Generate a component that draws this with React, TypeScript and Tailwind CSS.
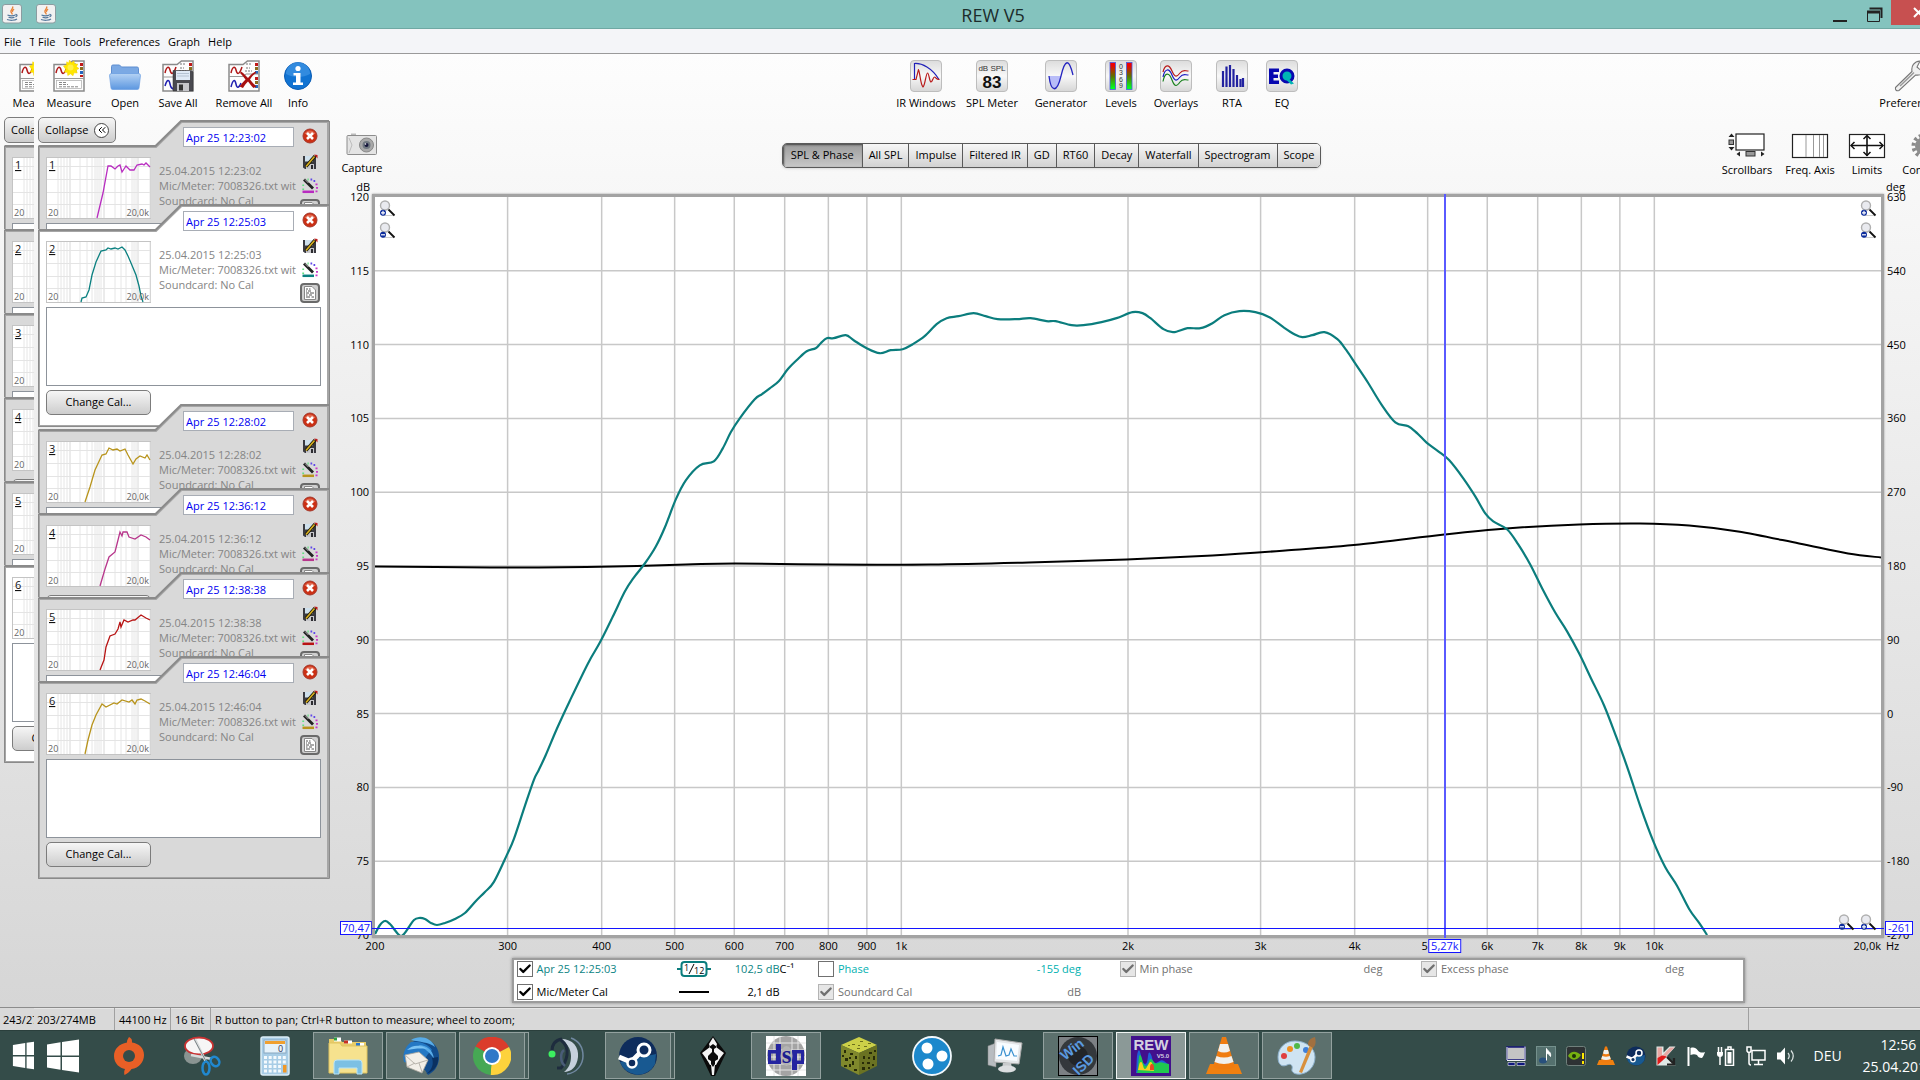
import React from 'react';
import { Check, ChevronsLeft } from 'lucide-react';

type Point = [number, number];

type Measurement = {
  id: number;
  time: string;
  color: string;
  notes: boolean;
  curve: string;
};

const measurements: Measurement[] = [
  { id: 1, time: '12:23:02', color: '#b82cc0', notes: true, curve: '51,61 57,36 62,9 65,9 69,12 72,9 74,8 76,15 78,12 80,9 84,13 88,13 91,8 96,7 98,8 100,6 104,10' },
  { id: 2, time: '12:25:03', color: '#0b8080', notes: true, curve: '35,61 36,57 40,56 43,49 46,34 50,21 55,10 60,9 62,7 65,8 69,7 72,8 76,6 79,9 82,15 85,22 90,34 93,45 95,55 97,61' },
  { id: 3, time: '12:28:02', color: '#b8941c', notes: true, curve: '39,61 44,46 49,29 56,14 60,13 63,7 67,9 71,8 74,10 79,8 82,14 87,23 90,18 94,15 99,17 101,14 104,19' },
  { id: 4, time: '12:36:12', color: '#b8368c', notes: false, curve: '54,61 59,44 63,32 69,27 71,19 74,7 76,11 77,7 81,7 83,12 89,14 95,10 100,12 104,15' },
  { id: 5, time: '12:38:38', color: '#b81414', notes: true, curve: '54,61 58,51 60,38 64,27 69,25 72,20 74,13 75,18 78,11 82,13 87,11 89,11 95,6 100,9 104,11' },
  { id: 6, time: '12:46:04', color: '#b8941c', notes: true, curve: '39,61 42,47 46,32 50,22 56,11 60,14 68,10 71,11 76,7 83,9 86,7 89,11 91,7 95,6 99,8 104,11' },
];

const splCurve: Point[] = [
  [0, 736], [5, 727], [10, 723], [15, 726], [19, 731], [23, 736], [26, 738], [29, 736], [34, 729], [39, 722], [44, 720], [50, 721],
  [56, 725], [62, 727], [70, 725], [80, 721], [90, 715], [101, 703], [110, 694], [119, 684], [132, 657], [139, 641], [150, 608],
  [159, 582], [164, 572], [171, 557], [182, 531], [195, 503], [213, 466], [225, 445], [238, 419], [250, 394], [259, 380],
  [270, 366], [281, 349], [290, 330], [301, 302], [311, 283], [325, 268], [339, 264], [348, 251], [356, 235], [365, 221],
  [380, 202], [387, 197], [395, 191], [404, 184], [413, 172], [423, 162], [432, 154], [441, 151], [446, 146], [452, 141],
  [459, 141], [471, 138], [479, 143], [492, 151], [505, 156], [516, 153], [528, 152], [538, 147], [550, 139], [562, 127],
  [572, 121], [584, 119], [599, 116], [611, 119], [623, 122], [642, 122], [656, 121], [672, 124], [681, 124], [697, 128],
  [709, 128], [727, 125], [742, 121], [758, 115], [768, 116], [776, 121], [789, 132], [799, 135], [813, 131], [826, 131],
  [838, 126], [850, 118], [865, 114], [881, 115], [895, 120], [909, 130], [920, 137], [928, 140], [938, 138], [950, 135],
  [963, 142], [972, 153], [982, 168], [994, 186], [1007, 207], [1021, 225], [1034, 229], [1043, 236], [1052, 245], [1064, 254],
  [1075, 263], [1089, 281], [1101, 299], [1111, 316], [1119, 324], [1133, 332], [1144, 347], [1156, 367], [1168, 391],
  [1181, 415], [1193, 434], [1205, 456], [1217, 481], [1230, 508], [1242, 539], [1254, 572], [1266, 608], [1279, 643],
  [1291, 669], [1303, 688], [1315, 711], [1325, 725], [1333, 737],
];

const calCurve: Point[] = [
  [0, 369], [115, 370], [164, 370], [238, 369], [311, 367], [360, 366], [458, 367], [556, 367], [654, 365], [752, 362],
  [838, 358], [911, 353], [985, 347], [1070, 337], [1132, 331], [1205, 327], [1266, 326], [1315, 328], [1364, 334],
  [1425, 346], [1474, 356], [1507, 360],
];

const frequencies = [300, 400, 500, 600, 700, 800, 900, 1000, 2000, 3000, 4000, 5000, 6000, 7000, 8000, 9000, 10000];
const levels = [120, 115, 110, 105, 100, 95, 90, 85, 80, 75, 70];

const xPercent = (hz: number) => (Math.log(hz / 200) / Math.log(100)) * 100;
const yPercent = (db: number) => ((120 - db) / 50) * 100;
const hzLabel = (hz: number) => (hz >= 1000 ? `${hz / 1000}k` : `${hz}`);

// Catmull-Rom spline through the points
const smoothPath = (pts: Point[]) =>
  pts.slice(1).reduce((d, p, i) => {
    const p0 = pts[Math.max(i - 1, 0)];
    const p1 = pts[i];
    const p3 = pts[Math.min(i + 2, pts.length - 1)];
    return `${d}C${p1[0] + (p[0] - p0[0]) / 6},${p1[1] + (p[1] - p0[1]) / 6} ${p[0] - (p3[0] - p1[0]) / 6},${p[1] - (p3[1] - p1[1]) / 6} ${p[0]},${p[1]}`;
  }, `M${pts[0][0]},${pts[0][1]}`);

/* ---------- icons ---------- */

const JavaIcon = () => (
  <svg width="20" height="20" viewBox="0 0 20 20">
    <rect x="0.500" y="0.500" width="19" height="18.500" rx="2.500" fill="#f1f1f1" stroke="#8b9ca0" />
    <path d="M10.500 2.500c1.500 2-2.500 3-1.500 5.500.5 1 1.500 1 1 2.500M12 5c-1 1-2 1.500-1.500 3" fill="none" stroke="#e8843a" strokeWidth="1.400" />
    <path d="M5.500 11c2 .8 6 .8 8 0M6.500 13.300c2 .6 4.500.6 6 0M5 15.500c3 1.200 8 1 10-.5M13.500 10.500c2-.3 2.200 1.700 0 2.300" fill="none" stroke="#54789c" strokeWidth="1.200" />
  </svg>
);

const SheetBack = () => (
  <>
    <path d="M1 4.500H15L19.500 1H31V31H1Z" fill="#fdfdfd" stroke="#8a8a8a" strokeWidth="1.500" />
    <path d="M3 13C4.500 6 7 6 8 10S11 16 14 7" fill="none" stroke="#b01818" strokeWidth="1.500" />
    <path d="M27 3h3v3h-3z" fill="#c01818" />
    <path d="M27 7h3v3h-3z" fill="#8a6c20" />
    <path d="M27 11h3v3h-3z" fill="#2468c0" />
    <path d="M18 4h6M18 8h4M17 11h7" stroke="#777" strokeWidth="1" strokeDasharray="2 1" />
  </>
);

const MeasureIcon = () => (
  <svg width="32" height="32" viewBox="0 0 32 32">
    <SheetBack />
    <path d="M1 18.500H31" stroke="#999" />
    <rect x="3.500" y="20.500" width="25" height="8" fill="#fff" stroke="#aaa" strokeWidth="0.700" />
    <path d="M6 22.500h7M6 24.500h9M6 26.800h19" stroke="#888" strokeDasharray="3 1" />
    <path d="M27 15h3v2h-3z" fill="#c01818" />
    <path d="M16.500 0l1.700 2.700L21 1l.5 3 3.200 0-1.200 2.800 2.500 1.700-2.800 1.500 1 3-3.200-.2-1 3-2.500-2-2.700 1.800-.4-3.200-3.200-.4 1.600-2.600L10.500 6l3-1 .2-3.200 2 1.200z" fill="#ffe600" stroke="#f5d000" strokeWidth="0.500" />
    <circle cx="17.500" cy="7.500" r="3" fill="#fff04a" />
  </svg>
);

const OpenIcon = () => (
  <svg width="32" height="32" viewBox="0 0 32 32">
    <defs>
      <linearGradient id="folder" x1="0" y1="0" x2="0" y2="1">
        <stop offset="0" stopColor="#b4d2f4" />
        <stop offset="1" stopColor="#5c97e0" />
      </linearGradient>
    </defs>
    <path d="M2.500 14V6.500q0-1.500 1.500-1.500h6.500l2 2H28q1.500 0 1.500 1.500V14z" fill="#7ba9e4" stroke="#5f8ed0" />
    <path d="M0.500 15.500q0-2 2-2h27q2 0 2 2L30 28q-.2 1.500-1.700 1.500H3.700Q2.200 29.500 2 28z" fill="url(#folder)" stroke="#6c9fe2" strokeWidth="0.700" />
  </svg>
);

const SaveAllIcon = () => (
  <svg width="32" height="32" viewBox="0 0 32 32">
    <SheetBack />
    <path d="M1 17H12M27 17H31" stroke="#999" />
    <path d="M3 26c2-7 4-7 5-2s3 5 4 5" fill="none" stroke="#2020b0" strokeWidth="1.500" />
    <path d="M11 10.500h18.500L31 12v19H11z" fill="#4a4a50" stroke="#333" strokeWidth="0.500" />
    <rect x="14" y="11" width="14" height="9" fill="#dfeaf6" />
    <path d="M15 13.500h12M15 16h12" stroke="#a9b9c9" strokeWidth="0.800" />
    <rect x="15" y="23" width="12" height="8" fill="#c6c6ca" />
    <rect x="17" y="24.500" width="4" height="6" fill="#333" />
  </svg>
);

const RemoveAllIcon = () => (
  <svg width="32" height="32" viewBox="0 0 32 32">
    <SheetBack />
    <path d="M1 16.500H15L18 14H31" stroke="#999" fill="none" />
    <path d="M27 17h3v3h-3z" fill="#c01818" />
    <path d="M27 21h3v3h-3z" fill="#8a6c20" />
    <path d="M27 25h3v3h-3z" fill="#2468c0" />
    <path d="M3 27c2-8 4-8 5-3s3 4 5-1" fill="none" stroke="#2020b0" strokeWidth="1.500" />
    <path d="M13 11.500c3 2 5 4.500 7 6.500 2-2.500 4-4.500 7.500-6.500l.5 1.500c-3 2-4.500 4-6 6.500 2 2.500 4 5 6.500 7l-3 1.500c-2-2-4-4.500-5.500-6.500-2 2-3.500 4-5 6.500l-3.500-1.500c2-2.500 4-5 6-7-2-2.500-3.500-4.500-5.500-6.500z" fill="#a81010" />
  </svg>
);

const InfoIcon = () => (
  <svg width="32" height="32" viewBox="0 0 32 32">
    <circle cx="16" cy="16" r="13.500" fill="#1173d2" stroke="#0a5cb4" />
    <path d="M4 14a12 12 0 0 1 24 0c-7 4-17 4-24 0z" fill="#4a9be8" opacity="0.600" />
    <circle cx="16" cy="8.500" r="2.600" fill="#fff" />
    <path d="M11.500 13h7v9.500H21V25H11v-2.500h3V15.500h-2.500z" fill="#fff" />
  </svg>
);

const Plate = ({ children }: { children: React.ReactNode }) => (
  <svg width="32" height="32" viewBox="0 0 32 32">
    <defs>
      <linearGradient id="plate" x1="0" y1="0" x2="0" y2="1">
        <stop offset="0" stopColor="#dcdcdc" />
        <stop offset="0.500" stopColor="#f8f8f8" />
        <stop offset="1" stopColor="#d6d6d6" />
      </linearGradient>
      <linearGradient id="meter" x1="0" y1="0" x2="0" y2="1">
        <stop offset="0.100" stopColor="#f00000" />
        <stop offset="0.500" stopColor="#607000" />
        <stop offset="0.950" stopColor="#00ff20" />
      </linearGradient>
    </defs>
    <rect x="0.500" y="0.500" width="31" height="31" rx="3.500" fill="url(#plate)" stroke="#bdbdbd" />
    {children}
  </svg>
);

const IrIcon = () => (
  <Plate>
    <path d="M4.500 20V3.500C12 3 22 8 29 19.500" fill="none" stroke="#2020b8" strokeWidth="1.200" />
    <path d="M2.500 19.500H6L8.500 9.500c1 0 2 16 4.500 17.500 2-1 3-14 4.500-14s2 9 3.500 9 2-5 3.500-5 1 2.500 5 2.500" fill="none" stroke="#b81818" strokeWidth="1.200" />
  </Plate>
);

const SplIcon = () => (
  <Plate>
    <text x="16" y="11" textAnchor="middle" fontSize="8" fontFamily="Liberation Sans, sans-serif" fill="#333">dB SPL</text>
    <text x="16" y="27.500" textAnchor="middle" fontSize="17" fontWeight="bold" fontFamily="Liberation Sans, sans-serif" fill="#111">83</text>
  </Plate>
);

const GeneratorIcon = () => (
  <Plate>
    <path d="M4 16C6 32 12 32 16 16z" fill="#b8bcf8" />
    <path d="M4 16C6 33 12 33 16 16S24-2 28 15" fill="none" stroke="#2424c0" strokeWidth="1.300" />
  </Plate>
);

const LevelsIcon = () => (
  <Plate>
    <rect x="5" y="2.500" width="5.500" height="27" fill="url(#meter)" stroke="#4a5ae0" strokeWidth="0.800" />
    <rect x="21.500" y="2.500" width="5.500" height="27" fill="url(#meter)" stroke="#4a5ae0" strokeWidth="0.800" />
    {['0', '3', '6', '9'].map((n, i) => (
      <text key={n} x="16" y={8.5 + i * 6.5} textAnchor="middle" fontSize="7" fontFamily="Liberation Sans, sans-serif" fill="#333">{n}</text>
    ))}
  </Plate>
);

const OverlaysIcon = () => (
  <Plate>
    <path d="M3 12C5 4 9 4 12 11s5 6 8 2 5-2 8.500-2" fill="none" stroke="#b81818" strokeWidth="1.200" />
    <path d="M3 17C5 8 9 8 12 15s5 6 8 2 5-2 8.500-2" fill="none" stroke="#1818c0" strokeWidth="1.200" />
    <path d="M3 21.500C5 12 9 12 12 20s5 6 8 2 5-2 8.500-2" fill="none" stroke="#18801c" strokeWidth="1.200" />
  </Plate>
);

const RtaIcon = () => (
  <Plate>
    <path d="M7 27V11M10.500 27V6.500M14 27V5M17.500 27V9M21 27V15M24.500 27V19M27 27V18" stroke="#2222a0" strokeWidth="2.200" />
  </Plate>
);

const EqIcon = () => (
  <Plate>
    <path d="M3 8.500h10v3.500H7.500v2.500H12V18H7.500v2.500H13V24H3z" fill="#0808b0" />
    <circle cx="21" cy="16" r="6" fill="#00b4b4" stroke="#0808b0" strokeWidth="3" />
    <path d="M22 18l6 5.500-3 1-5-5z" fill="#00b4b4" />
  </Plate>
);

const WrenchIcon = () => (
  <svg width="32" height="32" viewBox="0 0 32 32">
    <path d="M1.500 27.500L18 11.500C17 6 20 1.500 26 1l-3 6 4 3.500 4-4.500c1 6-4 10-9.500 9L5 30.500Q1 31.500 1.500 27.500z" fill="#f0f0f0" stroke="#777" strokeWidth="1.100" />
    <path d="M6 26L20 12.500" stroke="#999" strokeWidth="1.500" />
  </svg>
);

const CameraIcon = () => (
  <svg width="32" height="24" viewBox="0 0 32 24">
    <rect x="5" y="0.500" width="5" height="3" fill="#bbb" />
    <rect x="1" y="2.500" width="29.500" height="19" rx="1" fill="#e4e4e4" stroke="#8c8c8c" />
    <path d="M3 5l3 7-3 8" stroke="#bcbcbc" fill="none" />
    <circle cx="20.500" cy="12" r="7" fill="#a8a8a8" stroke="#888" />
    <circle cx="20.500" cy="12" r="4" fill="#707880" />
    <circle cx="20.500" cy="12" r="2" fill="#15153a" />
    <circle cx="19.500" cy="11" r="0.800" fill="#fff" />
  </svg>
);

const ScrollbarsIcon = () => (
  <svg width="38" height="26" viewBox="0 0 38 26">
    <rect x="8" y="1" width="28" height="16" fill="#fff" stroke="#222" strokeWidth="1.200" />
    <path d="M0.500 4L3.500 0.500L6.500 4zM0.500 14L3.500 17.500L6.500 14zM12 18.500v5L8.500 21zM33 18.500v5l3.500-2.500z" fill="#222" />
    <rect x="1" y="7" width="4.500" height="4.500" fill="#999" stroke="#333" />
    <rect x="18" y="18.500" width="9" height="4.500" fill="#999" stroke="#333" />
  </svg>
);

const FreqAxisIcon = () => (
  <svg width="38" height="26" viewBox="0 0 38 26">
    <rect x="1.500" y="1.500" width="35" height="23" fill="#fff" stroke="#222" strokeWidth="1.200" />
    <path d="M15 2v22M22.500 2v22M28.500 2v22M32.500 2v22" stroke="#999" />
  </svg>
);

const LimitsIcon = () => (
  <svg width="38" height="26" viewBox="0 0 38 26">
    <rect x="1.500" y="1.500" width="35" height="23" fill="#fff" stroke="#222" strokeWidth="1.200" />
    <path d="M3 12.500H35M19 3V23" stroke="#111" strokeWidth="1.600" />
    <path d="M6.500 9L3 12.500L6.500 16M31.500 9L35 12.500L31.500 16M15.500 6L19 2.500L22.500 6M15.500 19L19 22.500L22.500 19" fill="none" stroke="#111" strokeWidth="1.500" />
  </svg>
);

const GearIcon = () => (
  <svg width="26" height="26" viewBox="0 0 26 26">
    <circle cx="13" cy="13" r="10.500" fill="none" stroke="#8a8a8a" strokeWidth="4" strokeDasharray="3 2.500" />
    <circle cx="13" cy="13" r="6.500" fill="#c9c9c9" stroke="#8e8e8e" strokeWidth="5" />
    <circle cx="13" cy="13" r="3.500" fill="#f2f2f2" />
  </svg>
);

const ZoomIcon = ({ minus }: { minus?: boolean }) => (
  <svg width="17" height="17" viewBox="0 0 17 17">
    <path d="M3 15.500h12" stroke="#ccc" />
    <circle cx="6" cy="5.500" r="4.500" fill="#e9eaef" stroke="#b0b0b0" strokeWidth="1.400" />
    <path d="M9.500 9.500L15.500 15.500" stroke="#111" strokeWidth="1.800" />
    <circle cx="4" cy="12.800" r="3" fill="#0c2c9c" />
    {minus ? <path d="M2 12.800h4" stroke="#fff" strokeWidth="1.200" /> : <path d="M2 12.800h4M4 10.800v4" stroke="#fff" strokeWidth="1.200" />}
  </svg>
);

const CloseIcon = () => (
  <svg width="16" height="16" viewBox="0 0 16 16">
    <circle cx="8" cy="8" r="7" fill="#cc3014" stroke="#a4382c" />
    <path d="M2.500 6a6 6 0 0 1 11 0z" fill="#e88068" opacity="0.700" />
    <path d="M5 5L11 11M11 5L5 11" stroke="#fff" strokeWidth="2.600" />
  </svg>
);

const SaveIcon = () => (
  <svg width="16" height="16" viewBox="0 0 16 16">
    <path d="M1 2h13v13H3l-2-1.500z" fill="#3a3a40" />
    <rect x="3" y="2" width="8" height="5.500" fill="#cfe0ec" />
    <rect x="4" y="10" width="8" height="5" fill="#c8c8cc" />
    <rect x="9" y="11" width="2" height="4" fill="#2c2c30" />
    <path d="M4 12.500L13 2" stroke="#1c1808" strokeWidth="3.400" />
    <path d="M4 12.500L12.500 2.500" stroke="#d8b020" strokeWidth="1.600" />
    <path d="M12 0.500l3.500.5v3.500z" fill="#c01818" />
  </svg>
);

const ColorIcon = ({ color }: { color: string }) => (
  <svg width="16" height="16" viewBox="0 0 16 16">
    <path d="M1.200 10.500v1.500M1.200 6.500v1.500M5.500 1.500h1.200" stroke="#60e080" strokeWidth="1.800" />
    <path d="M8.500 1.500h1.700M11.500 3h1.700" stroke="#6048e8" strokeWidth="2" />
    <path d="M14.500 5.500v1.700M15 9v1.700M14.500 12.500v1.700" stroke="#c838c8" strokeWidth="2" />
    <path d="M2 1.500L11 10.500" stroke="#222" strokeWidth="2.800" />
    <path d="M3 1.500L6.500 5" stroke="#bbb" strokeWidth="1" />
    <path d="M0.500 13.800h11.500" stroke={color} strokeWidth="2.500" />
  </svg>
);

const NotesIcon = () => (
  <svg width="12" height="14" viewBox="0 0 12 14">
    <path d="M0.500 0.500H8L11.500 4V13.500H0.500Z" fill="#fff" stroke="#888" />
    <path d="M2 3h2M5 3h1.500M2 5h1M4 5h3M2 7h3M6 7h4M2 9h1.500M5 9h3M2 11h4M7.500 11h2.500" stroke="#555" />
  </svg>
);

/* ---------- left measurement list ---------- */

const Thumbnail = ({ m }: { m: Measurement }) => (
  <svg width="105" height="62" viewBox="0 0 105 62">
    <rect x="0.500" y="0.500" width="104" height="61" fill="#fff" stroke="#c4c4c4" />
    <path d="M12 1V61M15 1V61M18 1V61M21 1V61M34 1V61M41 1V61M46 1V61M49 1V61M51 1V61M53 1V61M55 1V61M69 1V61M75 1V61M80 1V61M86 1V61M88 1V61M90 1V61M104 1V61" stroke="#e6e6e6" />
    <path d="M24 1V61M58 1V61M92 1V61" stroke="#d8d8d8" />
    <path d="M1 22.500H104M1 35.500H104M1 47.500H104M1 9.500H104" stroke="#e4e4e4" />
    <polyline points={m.curve} fill="none" stroke={m.color} strokeWidth="1.300" />
    <text x="3" y="12" fontSize="11" textDecoration="underline" fill="#111">{m.id}</text>
    <text x="2" y="59" fontSize="9" fill="#666">20</text>
    <text x="103" y="59" fontSize="9" textAnchor="end" fill="#666">20,0k</text>
  </svg>
);

const MeasurementCard = ({ m, selected, expanded }: { m: Measurement; selected: boolean; expanded: boolean }) => (
  <article className={`relative w-[292px] overflow-hidden pl-2 ${expanded ? 'h-[223px] -mb-[23px]' : 'h-[109px] -mb-[25px]'}`}>
    <svg className="absolute left-0 top-0" width="292" height="223" viewBox="0 0 292 223">
      <path d="M1 27H118L143.500 2H290V222H1Z" fill={selected ? '#ffffff' : '#d9d9d9'} stroke="#a6a6a6" strokeWidth="2" />
      <path d="M0.500 26H117.500L143 1H291" fill="none" stroke="#8a8a8a" strokeWidth="2" />
      <path d="M0.500 26V222.500H291.500V1" fill="none" stroke="#8a8a8a" />
    </svg>
    <div className="relative flex pt-[7px]">
      <div className="w-[105px] shrink-0 pt-[30px]">
        <Thumbnail m={m} />
      </div>
      <div className="ml-2 w-[138px] shrink-0 overflow-hidden">
        <input
          readOnly
          aria-label={`Measurement ${m.id} name`}
          value={`Apr 25 ${m.time}`}
          className="ml-6 block h-5 w-[111px] border border-[#a8adb5] bg-white px-[2px] text-[#0000f0]"
        />
        <div className="mt-4 whitespace-nowrap leading-[15px] text-[#858585]">
          <p>25.04.2015 {m.time}</p>
          <p>Mic/Meter: 7008326.txt wit</p>
          <p>Soundcard: No Cal</p>
        </div>
      </div>
      <div className="ml-0.5 flex w-[22px] flex-col items-center pt-px">
        <button aria-label="Remove" className="mb-2.5"><CloseIcon /></button>
        <button aria-label="Save" className="mb-2"><SaveIcon /></button>
        <button aria-label="Trace colour" className="mb-[5px]"><ColorIcon color={m.color} /></button>
        <button aria-label="Notes" className="flex size-5 items-center justify-center rounded border-2 border-[#6a6a6a] bg-[#cfcfcf]">
          <NotesIcon />
        </button>
      </div>
    </div>
    {m.notes && (
      <textarea readOnly aria-label={`Notes ${m.id}`} className="relative mt-1 block h-[79px] w-[275px] resize-none border border-[#8d939b] bg-white" />
    )}
    {(expanded || !m.notes) && (
      <button className={`relative block h-[25px] w-[105px] rounded-[5px] border border-[#7c7c7c] bg-linear-to-b from-[#f6f6f6] to-[#cdcdcd] ${m.notes ? 'mt-1' : 'mt-2'}`}>
        Change Cal...
      </button>
    )}
  </article>
);

const MeasurementList = ({ selected }: { selected: number }) => (
  <aside className="w-[296px] shrink-0 pl-1">
    <button className="flex h-[26px] w-[78px] items-center gap-1.5 rounded-[5px] border border-[#7c7c7c] bg-linear-to-b from-[#f6f6f6] to-[#cdcdcd] pl-1.5">
      Collapse
      <span className="flex size-[15px] shrink-0 items-center justify-center rounded-full border border-[#444] bg-white">
        <ChevronsLeft size={12} />
      </span>
    </button>
    <div className="-mt-[23px]">
      {measurements.map((m) => (
        <MeasurementCard key={m.id} m={m} selected={m.id === selected} expanded={m.id === selected || m.id === measurements.length} />
      ))}
    </div>
  </aside>
);

/* ---------- toolbar ---------- */

const Tool = ({ label, width, icon }: { label: string; width: string; icon: React.ReactNode }) => (
  <button className={`flex shrink-0 flex-col items-center whitespace-nowrap ${width}`}>
    {icon}
    <span className="leading-[22px]">{label}</span>
  </button>
);

const Toolbar = () => (
  <div className="flex h-[63px] items-start justify-between pl-1 pr-1.5 pt-1.5">
    <div className="flex pr-3.5">
      <Tool label="Measure" width="w-[62px]" icon={<MeasureIcon />} />
      <Tool label="Open" width="w-[50px]" icon={<OpenIcon />} />
      <Tool label="Save All" width="w-14" icon={<SaveAllIcon />} />
      <Tool label="Remove All" width="w-[76px]" icon={<RemoveAllIcon />} />
      <Tool label="Info" width="w-8" icon={<InfoIcon />} />
    </div>
    <div className="flex">
      <Tool label="IR Windows" width="w-[70px]" icon={<IrIcon />} />
      <Tool label="SPL Meter" width="w-[62px]" icon={<SplIcon />} />
      <Tool label="Generator" width="w-[76px]" icon={<GeneratorIcon />} />
      <Tool label="Levels" width="w-11" icon={<LevelsIcon />} />
      <Tool label="Overlays" width="w-[66px]" icon={<OverlaysIcon />} />
      <Tool label="RTA" width="w-[46px]" icon={<RtaIcon />} />
      <Tool label="EQ" width="w-[54px]" icon={<EqIcon />} />
    </div>
    <Tool label="Preferences" width="w-[76px]" icon={<WrenchIcon />} />
  </div>
);

/* ---------- graph ---------- */

const tabs = ['SPL & Phase', 'All SPL', 'Impulse', 'Filtered IR', 'GD', 'RT60', 'Decay', 'Waterfall', 'Spectrogram', 'Scope'];

const GraphHeader = () => (
  <div className="flex h-[62px] items-start justify-between pt-4">
    <button className="flex w-[54px] flex-col items-center">
      <CameraIcon />
      <span className="leading-[22px]">Capture</span>
    </button>
    <div className="mt-2.5 flex h-[25px] overflow-hidden rounded-[5px] border border-[#5a5a5a] shadow">
      {tabs.map((tab, i) => (
        <button
          key={tab}
          className={
            i === 0
              ? 'bg-linear-to-b from-[#9c9c9c] to-[#c8c8c8] px-2 shadow-[inset_1px_1px_2px_#444]'
              : 'border-l border-[#5a5a5a] bg-linear-to-b from-[#f7f7f7] to-[#d2d2d2] px-1.5'
          }
        >
          {tab}
        </button>
      ))}
    </div>
    <div className="flex">
      <Tool label="Scrollbars" width="w-[66px]" icon={<ScrollbarsIcon />} />
      <Tool label="Freq. Axis" width="w-[60px]" icon={<FreqAxisIcon />} />
      <Tool label="Limits" width="w-[54px]" icon={<LimitsIcon />} />
      <Tool label="Controls" width="w-[60px]" icon={<GearIcon />} />
    </div>
  </div>
);

const Plot = () => (
  <div className="relative border-[3px] border-[#a3a3a3] bg-white shadow-[0_0_2px_#999]">
    <svg className="absolute inset-0 size-full" viewBox="0 0 1507 737" preserveAspectRatio="none">
      {frequencies.map((hz) => (
        <line key={hz} x1={xPercent(hz) * 15.07} x2={xPercent(hz) * 15.07} y1="0" y2="737" stroke="#c8c8c8" strokeWidth="1.500" />
      ))}
      {levels.slice(1, -1).map((db) => (
        <line key={db} x1="0" x2="1507" y1={yPercent(db) * 7.37} y2={yPercent(db) * 7.37} stroke="#c8c8c8" strokeWidth="1.500" />
      ))}
      <path d={smoothPath(calCurve)} fill="none" stroke="#000" strokeWidth="2" />
      <path d={smoothPath(splCurve)} fill="none" stroke="#0b7d7d" strokeWidth="2.200" />
    </svg>
    <div className="absolute -inset-y-[3px] w-[2px] -translate-x-px bg-[#5a5aff]" style={{ left: `${xPercent(5270)}%` }} />
    <div className="absolute -inset-x-[3px] h-px bg-[#1414ff]" style={{ top: `${yPercent(70.47)}%` }} />
    <div className="absolute left-1 top-[3px] flex flex-col gap-[5px]">
      <button aria-label="Zoom level in"><ZoomIcon /></button>
      <button aria-label="Zoom level out"><ZoomIcon minus /></button>
    </div>
    <div className="absolute right-1 top-[3px] flex flex-col gap-[5px]">
      <button aria-label="Zoom phase in"><ZoomIcon /></button>
      <button aria-label="Zoom phase out"><ZoomIcon minus /></button>
    </div>
    <div className="absolute bottom-1 right-1 flex gap-[5px]">
      <button aria-label="Zoom frequency out"><ZoomIcon minus /></button>
      <button aria-label="Zoom frequency in"><ZoomIcon /></button>
    </div>
  </div>
);

const Graph = () => (
  <div className="grid min-h-0 flex-1 grid-cols-[37px_1fr_70px] grid-rows-[15px_1fr_18px]">
    <div className="pr-0.5 text-right leading-[15px]">dB</div>
    <div />
    <div className="pl-0.5 leading-[15px]">deg</div>

    <div className="relative my-[3px]">
      {levels.map((db) => (
        <span key={db} className="absolute right-[3px] -translate-y-1/2 leading-3" style={{ top: `${yPercent(db)}%` }}>{db}</span>
      ))}
      <span className="absolute right-0 -translate-y-1/2 border border-[#1414ff] bg-white px-px leading-3 text-[#1414ff]" style={{ top: `${yPercent(70.47)}%` }}>
        70,47
      </span>
    </div>
    <Plot />
    <div className="relative my-[3px]">
      {levels.map((db, i) => (
        <span key={db} className="absolute left-[3px] -translate-y-1/2 leading-3" style={{ top: `${yPercent(db)}%` }}>{630 - i * 90}</span>
      ))}
      <span className="absolute left-px -translate-y-1/2 border border-[#1414ff] bg-white px-0.5 leading-3 text-[#1414ff]" style={{ top: `${yPercent(70.47)}%` }}>
        -261
      </span>
    </div>

    <div />
    <div className="relative mx-[3px] leading-4">
      {[200, ...frequencies].map((hz) => (
        <span key={hz} className="absolute -translate-x-1/2" style={{ left: `${xPercent(hz)}%` }}>{hzLabel(hz)}</span>
      ))}
      <span className="absolute right-0">20,0k</span>
      <span className="absolute top-px -translate-x-1/2 border border-[#1414ff] bg-white px-0.5 leading-3 text-[#1414ff]" style={{ left: `${xPercent(5270)}%` }}>
        5,27k
      </span>
    </div>
    <div className="pl-0.5 leading-4">Hz</div>
  </div>
);

type LegendItem = {
  label: string;
  value: string;
  checked: boolean;
  disabled?: boolean;
  tone: string;
  mark?: React.ReactNode;
  suffix?: string;
};

const SmoothingMark = () => (
  <svg width="34" height="16" viewBox="0 0 34 16" className="shrink-0">
    <path d="M0 8h4M30 8h4" stroke="#0b7d7d" strokeWidth="2" />
    <rect x="4.500" y="1" width="25" height="14" rx="3" fill="#fff" stroke="#0b7d7d" strokeWidth="2" />
    <text x="7" y="10" fontSize="9" fill="#000">1</text>
    <path d="M12 13L17 3" stroke="#000" />
    <text x="17" y="13" fontSize="9" fill="#000">12</text>
  </svg>
);

const LineMark = () => (
  <svg width="34" height="16" viewBox="0 0 34 16" className="shrink-0">
    <path d="M2 8h30" stroke="#000" strokeWidth="2" />
  </svg>
);

const legend: LegendItem[] = [
  { label: 'Apr 25 12:25:03', value: '102,5 dB', checked: true, tone: 'text-[#0b8484]', mark: <SmoothingMark />, suffix: 'C⁻¹' },
  { label: 'Phase', value: '-155 deg', checked: false, tone: 'text-[#00b0b0]' },
  { label: 'Min phase', value: 'deg', checked: true, disabled: true, tone: 'text-[#707070]' },
  { label: 'Excess phase', value: 'deg', checked: true, disabled: true, tone: 'text-[#707070]' },
  { label: 'Mic/Meter Cal', value: '2,1 dB', checked: true, tone: 'text-black', mark: <LineMark /> },
  { label: 'Soundcard Cal', value: 'dB', checked: true, disabled: true, tone: 'text-[#707070]' },
];

const Legend = () => (
  <div className="ml-[37px] mr-[70px] mt-0.5 flex justify-center">
    <div className="grid w-[1233px] grid-cols-4 gap-y-[7px] border-2 border-[#9c9c9c] bg-white py-px pl-[3px] pr-5 shadow-[0_0_3px_#888]">
      {legend.map((item) => (
        <div key={item.label} className={`flex h-4 items-center ${item.tone}`}>
          <label className="flex w-40 shrink-0 items-center gap-1">
            <span className="relative size-4 shrink-0">
              <input
                type="checkbox"
                defaultChecked={item.checked}
                disabled={item.disabled}
                className={`block size-4 appearance-none border ${item.disabled ? 'border-[#b4b4b4] bg-[#e6e6e6]' : 'border-[#707070] bg-white'}`}
              />
              {item.checked && (
                <Check size={14} strokeWidth={4} className={`pointer-events-none absolute left-px top-px ${item.disabled ? 'text-[#707070]' : 'text-black'}`} />
              )}
            </span>
            {item.label}
          </label>
          {item.mark}
          <span className={`text-right ${item.mark ? 'w-[69px]' : 'w-[103px]'}`}>{item.value}</span>
          {item.suffix && <span className="text-black">{item.suffix}</span>}
        </div>
      ))}
    </div>
  </div>
);

/* ---------- taskbar ---------- */

const StartIcon = ({ size }: { size: number }) => (
  <svg width={size} height={size} viewBox="0 0 34 34">
    <path d="M1 5.500L14.500 3.300V16.500H1zM16 3L33 0.500V16.500H16zM1 18H14.500V30.700L1 28.500zM16 18H33V33.500L16 31z" fill="#fff" />
  </svg>
);

const OriginIcon = () => (
  <svg width="32" height="40" viewBox="0 0 32 40">
    <path d="M16 1c-2 3-2 4-2 5.500C6 8 1 13 1 20c0 8 6 12 11 13-1 2-1 4-.5 6 3-1.500 6-4 7-6C26 32 31 26 31 19c0-7-5-11.500-12-12.500 0-2 .5-3.500-3-5.500z" fill="#e85f26" />
    <circle cx="16" cy="20" r="6" fill="#344c49" />
  </svg>
);

const SnipIcon = () => (
  <svg width="40" height="40" viewBox="0 0 40 40">
    <ellipse cx="11" cy="20" rx="9" ry="8" fill="#8a9492" />
    <ellipse cx="17" cy="10" rx="14" ry="8.500" fill="#f6f6f6" stroke="#c83232" strokeWidth="1.800" />
    <path d="M13 3L24 26M9 19L30 23" stroke="#d8dcdc" strokeWidth="2.500" />
    <path d="M12 3L25 27" stroke="#7c8488" strokeWidth="1" />
    <ellipse cx="24" cy="32" rx="3.500" ry="6.500" fill="none" stroke="#2088d0" strokeWidth="2.500" />
    <ellipse cx="33" cy="25.500" rx="4" ry="5" fill="none" stroke="#2088d0" strokeWidth="2.500" transform="rotate(-35 33 25.500)" />
  </svg>
);

const CalculatorIcon = () => (
  <svg width="30" height="40" viewBox="0 0 30 40">
    <rect x="1" y="1" width="28" height="38" rx="2" fill="#a8cde6" stroke="#dceef8" strokeWidth="1.500" />
    <rect x="4" y="4" width="22" height="13" fill="#e6f2fa" stroke="#88a8c0" />
    <rect x="5" y="5" width="20" height="3" fill="#f0a030" />
    <text x="18" y="16" fontSize="9" fill="#335">0</text>
    <path d="M4 21.500h22M4 26h22M4 30.500h17M4 35h17" stroke="#f4fafd" strokeWidth="3" strokeDasharray="3 1.700" />
    <rect x="23" y="29" width="3.500" height="7.500" fill="#f09828" />
  </svg>
);

const ExplorerIcon = () => (
  <svg width="40" height="40" viewBox="0 0 40 40">
    <path d="M1 3h11l2 3h24v30H1z" fill="#e8cc68" />
    <path d="M6 1.500h7v4H6zM16 4.500h8v3h-8zM28 7h8v3h-8z" fill="#fff" />
    <path d="M6 1.500h3v3H6z" fill="#30a040" />
    <path d="M16 4.500h4v3h-4z" fill="#c83020" />
    <path d="M28 7h4v3h-4z" fill="#2878d0" />
    <path d="M1 7h11l2 3h25v27H1z" fill="#f6e28e" stroke="#e0c460" />
    <path d="M6 38V27q0-3 3-3h22q3 0 3 3v11h-5v-6H11v6z" fill="#7cc0e4" stroke="#b8e4f8" />
  </svg>
);

const ThunderbirdIcon = () => (
  <svg width="40" height="40" viewBox="0 0 40 40">
    <path d="M22 3c10 1 17 9 16 20-1 8-5 13-11 16l-3-5L6 27C1 15 9 3 22 3z" fill="#124c8c" />
    <path d="M10 6C4 11 1 18 3 26l16 4 8-12 4-4c-4-6-12-9-21-8z" fill="#2478c4" />
    <path d="M4 19l14-3 9 8-6 13-15-6z" fill="#f2efe8" stroke="#a8a49c" strokeWidth="0.800" />
    <path d="M4 19l10 9 13-4M6 31l8-4M21 36l-3-9" fill="none" stroke="#b8b4ac" />
    <path d="M10 4c8-5 20-3 24 7-7-5-15-5-24-7zM17 9c9 0 15 5 16 14-4-7-9-10-16-14z" fill="#58ace8" />
    <path d="M6 14c5-5 13-6 20-1-7-1-14 0-20 1z" fill="#7cc4f4" />
    <path d="M31 22c2 6 0 12-6 16 9-3 13-10 12-17z" fill="#0a3060" />
  </svg>
);

const ChromeIcon = () => (
  <svg width="38" height="38" viewBox="0 0 38 38">
    <path d="M19 19L2.500 9.500A19 19 0 0 1 36 10z" fill="#db3c2c" />
    <path d="M19 19L36 10A19 19 0 0 1 17.500 37.900z" fill="#fdd23c" />
    <path d="M19 19L17.500 37.900A19 19 0 0 1 2.500 9.500z" fill="#46a854" />
    <circle cx="19" cy="19" r="9" fill="#fff" />
    <circle cx="19" cy="19" r="7" fill="#3078c8" />
  </svg>
);

const TeamspeakIcon = () => (
  <svg width="40" height="40" viewBox="0 0 40 40">
    <path d="M14 3c12 0 18 8 17 18s-7 15-14 15c5-4 7-9 7-16S20 7 14 3z" fill="#c6d0dc" />
    <path d="M24 2c8 3 12 10 12 18s-6 17-16 18" fill="none" stroke="#7088a0" strokeWidth="1.500" />
    <path d="M14 4c5 4 7 9 6 15s-2 9-6 13l-4 0M5 15C5 7 9 4 15 3" fill="none" stroke="#1e2c3e" strokeWidth="3" />
    <path d="M17 14c-4 3-4 12 1 16" fill="none" stroke="#4a5c78" strokeWidth="2.500" />
    <circle cx="5" cy="18" r="3.500" fill="#3cf060" />
  </svg>
);

const SteamIcon = ({ size }: { size: number }) => (
  <svg width={size} height={size} viewBox="0 0 40 40">
    <circle cx="20" cy="20" r="19" fill="#0e2c5c" />
    <path d="M2 26a19 19 0 0 0 35 2l1-10z" fill="#1c6ca8" opacity="0.700" />
    <path d="M1 21l12 5 9-9" fill="none" stroke="#fff" strokeWidth="5" />
    <circle cx="26" cy="14" r="6" fill="#0e2c5c" stroke="#fff" strokeWidth="3" />
    <circle cx="14" cy="27" r="4.500" fill="#0e2c5c" stroke="#fff" strokeWidth="2.500" />
  </svg>
);

const SkyrimIcon = () => (
  <svg width="26" height="40" viewBox="0 0 26 40">
    <path d="M13 0L26 17L15 40H11L0 17z" fill="#0a0a0a" />
    <path d="M13 1.500L17 8 16 11l8 6-6 8 0-5-4-4v-3l3-2-4-3-4 3 3 2v3l-4 4v5L2 17l8-6-1-3z" fill="#f4f4f4" />
    <path d="M6 22l5 3v4l-1 0zM20 22l-5 3v4l1 0zM11 28l2 3 2-3-1 11h-2z" fill="#f4f4f4" />
  </svg>
);

const DspIcon = () => (
  <svg width="40" height="40" viewBox="0 0 40 40">
    <rect width="40" height="40" fill="#fff" />
    <ellipse cx="20" cy="20" rx="19" ry="20" fill="#a4a4a4" />
    <path d="M0 7h40M0 14h40M0 21h40M0 28h40M0 34h40M8 0v40M14 0v40M26 0v40M32 0v40" stroke="#e4e4e4" />
    <path d="M10 8h5v20H2v-14h8zM5 17.500v7h5v-7zM26 14h12v14h-7v6h-5zM31 17.500v7h4v-7z" fill="#2424a0" fillRule="evenodd" />
    <ellipse cx="20.500" cy="20" rx="6" ry="10" fill="#b4b4b4" />
    <text x="20.500" y="27" textAnchor="middle" fontSize="25" fontWeight="bold" fontFamily="Liberation Serif, serif" fill="#1c1c90">s</text>
  </svg>
);

const SpongeIcon = () => (
  <svg width="38" height="40" viewBox="0 0 38 40">
    <path d="M19 1L37 9L19 17L1 9z" fill="#ccd048" />
    <path d="M1 9L19 17V39L1 30z" fill="#80882c" />
    <path d="M37 9L19 17V39L37 30z" fill="#6a7222" />
    <path d="M4 14h2v3H4zM10 17h3v2h-3zM5 22h3v3H5zM12 25h2v4h-2zM4 29h3v2H4zM14 33h3v2h-3zM9 21h2v2H9zM15 20h2v3h-2zM9 28h2v3H9zM2 19h2v2H2zM23 20h2v3h-2zM29 16h3v2h-3zM33 20h2v4h-2zM27 26h3v2h-3zM22 31h3v3h-3zM32 28h2v2h-2zM28 21h2v2h-2zM22 26h2v2h-2zM28 31h2v2h-2zM34 14h2v2h-2z" fill="#282c08" />
    <path d="M12 8h3v1h-3zM20 5h3v1h-3zM24 10h3v1h-3zM17 12h3v1h-3zM8 9h2v1H8zM28 7h3v1h-3zM18 9h2v1h-2z" fill="#6c701c" />
  </svg>
);

const HamaIcon = () => (
  <svg width="40" height="40" viewBox="0 0 40 40">
    <circle cx="20" cy="20" r="19" fill="#1c88cc" stroke="#f2f8fc" strokeWidth="1.800" />
    <circle cx="15" cy="12" r="5.500" fill="#fff" />
    <circle cx="30" cy="20" r="5.500" fill="#fff" />
    <circle cx="16" cy="28" r="5.500" fill="#fff" />
  </svg>
);

const MonitorIcon = () => (
  <svg width="38" height="36" viewBox="0 0 38 36">
    <path d="M2 8l8-3v24l-8-2z" fill="#b8bcc0" stroke="#888" strokeWidth="0.500" />
    <path d="M9 1l27 4-3 21-25-2z" fill="#e4e6e8" stroke="#aaa" />
    <path d="M11 4l22 3-2 16-21-2z" fill="#f8fcff" />
    <path d="M12 18l3-1 2-8 3 9 3-1 2-6 3 7 3 0" fill="none" stroke="#3890d0" strokeWidth="1.200" />
    <path d="M17 25h8l1 5H16z" fill="#c8cacc" />
    <ellipse cx="21" cy="31" rx="9" ry="3.500" fill="#dcdee0" />
  </svg>
);

const WinIsdIcon = () => (
  <svg width="40" height="40" viewBox="0 0 40 40">
    <rect x="0.500" y="0.500" width="39" height="39" fill="#7c8084" stroke="#000" />
    <circle cx="20" cy="20" r="19" fill="#34383c" />
    <circle cx="20" cy="20" r="10" fill="#222528" />
    <text x="17" y="17" textAnchor="middle" fontSize="14" fontWeight="bold" fontFamily="Liberation Sans, sans-serif" fill="#5a9ae0" transform="rotate(-38 17 17)">Win</text>
    <text x="26" y="33" textAnchor="middle" fontSize="14" fontWeight="bold" fontFamily="Liberation Sans, sans-serif" fill="#5a9ae0" transform="rotate(-45 26 29)">ISD</text>
  </svg>
);

const RewIcon = () => (
  <svg width="40" height="40" viewBox="0 0 40 40">
    <rect width="40" height="40" fill="#42108c" />
    <path d="M5 37C6 30 5 16 8 14c3 4 2 14 6 14s2-14 5-11 2 12 6 10 5-4 8-2l5 4v8z" fill="#2060d8" />
    <path d="M6 37c2-5 1-18 3-18s3 12 6 11 3-8 5-7 4 6 7 4 5 0 11 1v9z" fill="#20c850" />
    <path d="M7 34c1-3 1-8 3-8s2 7 4 7 4-8 6-7 2 6 3 9z" fill="#f8d020" />
    <path d="M19 34c0-4 0-6 2-6s2 3 2 6z" fill="#e84820" />
    <text x="20" y="14" textAnchor="middle" fontSize="15" fontWeight="bold" fill="#d4d0e0" fontFamily="Liberation Sans, sans-serif">REW</text>
    <text x="32" y="22" textAnchor="middle" fontSize="6" fontWeight="bold" fill="#d4d0e0" fontFamily="Liberation Sans, sans-serif">V5.0</text>
  </svg>
);

const VlcIcon = ({ size }: { size: number }) => (
  <svg width={size} height={size} viewBox="0 0 40 40">
    <path d="M6 28h28l4 10H2z" fill="#f08010" />
    <path d="M18 1h4l9 30q-11 5-22 0z" fill="#f07c10" />
    <path d="M16 8h8l2 7q-6 3-12 0zM12.500 20q7.500 3 15 0l2 6q-9.500 4-19 0z" fill="#f0f0ee" />
  </svg>
);

const PaintIcon = () => (
  <svg width="40" height="40" viewBox="0 0 40 40">
    <path d="M18 5C8 5 1 12 1 21s5 10 9 8 6 1 5 4 3 6 9 5c8-1 14-8 14-17S29 5 18 5z" fill="#cfe4f2" stroke="#8cb0cc" />
    <circle cx="7" cy="20" r="3" fill="#e04040" />
    <circle cx="13" cy="13" r="3" fill="#f09020" />
    <circle cx="20" cy="10" r="3" fill="#50b848" />
    <circle cx="29" cy="14" r="3" fill="#4080d8" />
    <path d="M33 9L22 36l3 1L36 11z" fill="#d8903c" />
    <path d="M31 9c0-5 3-7 7-8 1 5 1 8-2 11z" fill="#a07040" />
  </svg>
);

type Task = { name: string; icon: React.ReactNode; frame: 'none' | 'open' | 'active'; stacked?: boolean };

const tasks: Task[] = [
  { name: 'Origin', icon: <OriginIcon />, frame: 'none' },
  { name: 'Snipping Tool', icon: <SnipIcon />, frame: 'none' },
  { name: 'Calculator', icon: <CalculatorIcon />, frame: 'none' },
  { name: 'Explorer', icon: <ExplorerIcon />, frame: 'open' },
  { name: 'Thunderbird', icon: <ThunderbirdIcon />, frame: 'open' },
  { name: 'Chrome', icon: <ChromeIcon />, frame: 'open', stacked: true },
  { name: 'TeamSpeak', icon: <TeamspeakIcon />, frame: 'none' },
  { name: 'Steam', icon: <SteamIcon size={40} />, frame: 'open', stacked: true },
  { name: 'Skyrim', icon: <SkyrimIcon />, frame: 'none' },
  { name: 'DSP', icon: <DspIcon />, frame: 'open' },
  { name: 'Minecraft', icon: <SpongeIcon />, frame: 'none' },
  { name: 'Hamachi', icon: <HamaIcon />, frame: 'none' },
  { name: 'Monitor', icon: <MonitorIcon />, frame: 'none' },
  { name: 'WinISD', icon: <WinIsdIcon />, frame: 'open' },
  { name: 'REW', icon: <RewIcon />, frame: 'active' },
  { name: 'VLC', icon: <VlcIcon size={40} />, frame: 'open' },
  { name: 'Paint', icon: <PaintIcon />, frame: 'open' },
];

const frames = {
  none: 'border-transparent',
  open: 'border-[#93a19f] bg-[#5c706d]',
  active: 'border-[#f0f4f3] bg-[#8b9997]',
};

const trayIcons = [
  <svg key="screen" width="20" height="20" viewBox="0 0 20 20">
    <path d="M1 1h18v13H1z" fill="#c4c4c4" stroke="#141478" strokeWidth="1.500" />
    <path d="M1 1v13M19 0.500v14.500M1 14.500h18" stroke="#f4f4f4" />
    <path d="M2 16.500h7v3H2zM11 16.500h8v3h-8z" fill="#101880" stroke="#e8e8e8" strokeWidth="0.600" />
  </svg>,
  <svg key="music" width="20" height="20" viewBox="0 0 20 20">
    <rect x="0.500" y="0.500" width="19" height="19" fill="#54706e" stroke="#74908c" />
    <ellipse cx="7" cy="14.500" rx="4" ry="3" fill="#28507c" />
    <path d="M10.500 14.500V2.500c1 3 5 3 4 8-1-2.500-3-3-4-3" fill="#fff" stroke="#fff" />
  </svg>,
  <svg key="nvidia" width="20" height="20" viewBox="0 0 20 20">
    <rect x="0.500" y="0.500" width="19" height="19" rx="2" fill="#2e3234" stroke="#70807c" />
    <path d="M2 10c3-6 9-5 13-1-4 6-9 6-13 1z" fill="#76b010" />
    <circle cx="8" cy="10" r="2" fill="#1c3008" />
    <path d="M17 7v6M17 15v3" stroke="#ffe800" strokeWidth="2" />
  </svg>,
  <VlcIcon key="vlc" size={20} />,
  <SteamIcon key="steam" size={20} />,
  <svg key="kaspersky" width="20" height="20" viewBox="0 0 20 20">
    <path d="M0.500 0.500h7v6l6-6h6L11 10l8.500 9.500H0.500z" fill="#dfe8e6" />
    <path d="M1.500 10V1.500h4.500V10L14 1.500h4.500L1.500 19z" fill="#e8a8a4" />
    <path d="M1.500 19V12L6 9.500l5 1z" fill="#e01c1c" />
    <path d="M11 11l6 6M18 12v6.500h-7" stroke="#222" strokeWidth="2.200" fill="none" />
  </svg>,
  <svg key="flag" width="20" height="20" viewBox="0 0 20 20">
    <path d="M2.500 1v19" stroke="#fff" strokeWidth="2" />
    <path d="M4.500 2C8 1 10 2 11.500 4c2 3 5 3 7.500 2-1 3-2 5-3 6-3 0-4-1-5-3-2-1-4-1-6.500 0z" fill="#fff" />
  </svg>,
  <svg key="power" width="20" height="20" viewBox="0 0 20 20">
    <path d="M2.500 1v5M5.500 1v5M4 9v10" stroke="#fff" strokeWidth="1.500" />
    <path d="M1 6h6v2q0 3-3 3t-3-3z" fill="#fff" />
    <path d="M9.500 3.500h8v16h-8zM12 1h3v2.500h-3z" fill="#344c49" stroke="#fff" strokeWidth="1.500" />
    <path d="M11.500 6h4v11.500h-4z" fill="#fff" />
  </svg>,
  <svg key="network" width="20" height="20" viewBox="0 0 20 20">
    <path d="M6 4.500h13v9.500H6zM12.500 14v4M8 18.500h9" fill="none" stroke="#fff" strokeWidth="1.500" />
    <path d="M3 7v10q0 2 2 2M1 1h4v4q-2 3-4 0z" fill="none" stroke="#fff" strokeWidth="1.500" />
  </svg>,
  <svg key="volume" width="20" height="20" viewBox="0 0 20 20">
    <path d="M1 6.500h3.500L9 1.500v17L4.500 13.500H1z" fill="#fff" />
    <path d="M12 7q2.500 3 0 6M15 4.500q4.500 5.500 0 11" fill="none" stroke="#dfe6e5" strokeWidth="1.200" />
  </svg>,
];

const Taskbar = () => (
  <footer className="flex h-[50px] shrink-0 items-center border-t border-[#2a3f3c] bg-[#344c49] text-white">
    <button aria-label="Start" className="mr-[3px] flex w-[57px] shrink-0 justify-center"><StartIcon size={34} /></button>
    <nav className="flex flex-1 gap-[3px]">
      {tasks.map((task) => (
        <div key={task.name} className="flex h-[47px] w-[70px] shrink-0">
          <button aria-label={task.name} className={`flex flex-1 items-center justify-center border ${frames[task.frame]}`}>
            {task.icon}
          </button>
          {task.stacked && <span className="w-1 border-y border-r border-[#93a19f] bg-[#465c59]" />}
        </div>
      ))}
    </nav>
    <div className="flex items-center gap-2.5">{trayIcons}</div>
    <span className="ml-[18px] w-[35px] text-sm">DEU</span>
    <div className="ml-3.5 mr-5 text-center text-sm leading-[22px]">
      <p>12:56</p>
      <p>25.04.2015</p>
    </div>
  </footer>
);

/* ---------- window chrome ---------- */

const menus = ['File', 'Tools', 'Preferences', 'Graph', 'Help'];

const TitleBar = () => (
  <header className="relative flex h-[29px] shrink-0 items-start border-b border-[#6fa8a3] bg-[#84c3be] pl-0.5 pr-6">
    <div className="pt-1"><JavaIcon /></div>
    <h1 className="flex-1 text-center text-lg leading-[31px] text-[#1c2c2b]">REW V5</h1>
    <div className="absolute right-0 flex">
      <button aria-label="Minimize" className="mr-5 pt-4"><span className="block h-0.5 w-3.5 bg-[#222]" /></button>
      <button aria-label="Restore" className="mr-2 pt-1">
        <svg width="16" height="15" viewBox="0 0 16 15">
          <path d="M2.500 1.500H14.500V11" fill="none" stroke="#222" strokeWidth="2" />
          <path d="M0.500 5.500h12v9h-12z" fill="none" stroke="#222" />
          <path d="M0 5h13" stroke="#222" strokeWidth="3" />
        </svg>
      </button>
      <button aria-label="Close" className="flex h-[25px] w-[63px] items-center bg-[#c75050] pl-[22px]">
        <svg width="11" height="11" viewBox="0 0 11 11">
          <path d="M1 1L10 10M10 1L1 10" stroke="#fff" strokeWidth="2" />
        </svg>
      </button>
    </div>
  </header>
);

const MenuBar = ({ items }: { items: string[] }) => (
  <nav className="flex h-[25px] shrink-0 items-center gap-2 border-b border-[#9a9a9a] bg-[#f4f5f8] pl-1 pt-[3px]">
    {items.map((item) => (
      <button key={item}>{item}</button>
    ))}
  </nav>
);

const StatusBar = () => (
  <div className="flex h-[23px] shrink-0 border-t border-[#8c8c8c] bg-[#d9d9d9] leading-6 shadow-[inset_0_1px_0_#e6e6e6]">
    <span className="w-[81px] border-r border-[#a0a0a0] pl-[3px]">203/274MB</span>
    <span className="w-14 border-r border-[#a0a0a0] pl-1">44100 Hz</span>
    <span className="w-10 border-r border-[#a0a0a0] pl-1">16 Bit</span>
    <span className="flex-1 pl-1">R button to pan; Ctrl+R button to measure; wheel to zoom;</span>
    <span className="w-[206px] border-l border-[#a0a0a0]" />
  </div>
);

// Strip of the neighbouring screen that stays visible on the left
const NeighbourScreen = () => (
  <div className="flex w-[34px] shrink-0 flex-col overflow-hidden">
    <div className="flex h-[29px] shrink-0 items-start border-b border-[#6fa8a3] bg-[#84c3be] pl-0.5 pt-1"><JavaIcon /></div>
    <MenuBar items={['File', 'Tools']} />
    <div className="flex min-h-0 flex-1 flex-col overflow-hidden bg-linear-to-b from-[#fdfdfd] to-[#d6d6d6]">
      <div className="flex h-[63px] shrink-0 items-start pl-1 pt-1.5">
        <Tool label="Measure" width="w-[62px]" icon={<MeasureIcon />} />
      </div>
      <MeasurementList selected={6} />
    </div>
    <div className="h-[23px] shrink-0 border-t border-[#8c8c8c] bg-[#d9d9d9] pl-[3px] leading-6">243/274MB</div>
    <div className="flex h-[50px] shrink-0 items-center border-t border-[#2a3f3c] bg-[#344c49] pl-3">
      <div className="w-[34px] shrink-0"><StartIcon size={31} /></div>
    </div>
  </div>
);

const App = () => {
  return (
    <div className="flex h-screen overflow-hidden font-['Open_Sans','Noto_Sans',sans-serif] text-[11px] text-black">
      <NeighbourScreen />
      <div className="flex w-screen shrink-0 flex-col">
        <TitleBar />
        <MenuBar items={menus} />
        <main className="flex min-h-0 flex-1 flex-col bg-linear-to-b from-[#fdfdfd] to-[#d6d6d6]">
          <Toolbar />
          <div className="flex min-h-0 flex-1">
            <MeasurementList selected={2} />
            <section className="ml-[5px] flex flex-1 flex-col pb-1">
              <GraphHeader />
              <Graph />
              <Legend />
            </section>
          </div>
        </main>
        <StatusBar />
        <Taskbar />
      </div>
    </div>
  );
};

export default App;
